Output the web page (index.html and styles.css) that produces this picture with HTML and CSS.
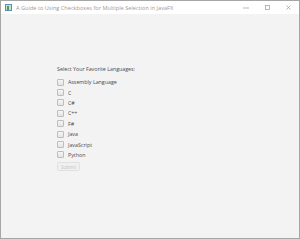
FILE: index.html
```html
<!DOCTYPE html>
<html lang="en">
<head>
    <meta charset="UTF-8">
    <title>A Guide to Using Checkboxes for Multiple Selection in JavaFX</title>
    <link rel="stylesheet" href="styles.css">
</head>
<body>
    <div class="window">
        <div class="title-bar">
            <svg class="app-icon" width="7" height="7" viewBox="0 0 7 7">
                <rect x="0" y="0" width="7" height="7" fill="#5a8fb8"/>
                <rect x="1" y="1" width="5" height="5" fill="#cfe0c8"/>
                <rect x="2" y="2" width="2" height="4" fill="#4e9a6a"/>
            </svg>
            <span class="title">A Guide to Using Checkboxes for Multiple Selection in JavaFX</span>
            <div class="controls">
                <svg width="6" height="6" viewBox="0 0 6 6"><line x1="0" y1="3" x2="6" y2="3" stroke="#9a9a9a" stroke-width="0.7"/></svg>
                <svg width="5" height="5" viewBox="0 0 5 5"><rect x="0.5" y="0.5" width="4" height="4" fill="none" stroke="#9a9a9a" stroke-width="0.7"/></svg>
                <svg width="5" height="5" viewBox="0 0 5 5"><path d="M0.5 0.5 L4.5 4.5 M4.5 0.5 L0.5 4.5" stroke="#9a9a9a" stroke-width="0.7"/></svg>
            </div>
        </div>
        <div class="content">
            <div class="form">
                <p class="heading">Select Your Favorite Languages:</p>
                <ul class="options">
                    <li><span class="box"></span>Assembly Language</li>
                    <li><span class="box"></span>C</li>
                    <li><span class="box"></span>C#</li>
                    <li><span class="box"></span>C++</li>
                    <li><span class="box"></span>F#</li>
                    <li><span class="box"></span>Java</li>
                    <li><span class="box"></span>JavaScript</li>
                    <li><span class="box"></span>Python</li>
                </ul>
                <button class="submit" disabled>Submit</button>
            </div>
        </div>
    </div>
</body>
</html>
```

FILE: styles.css
```css
html, body {
    margin: 0;
    padding: 0;
    height: 100%;
}
body {
    font-family: "Open Sans", "Liberation Sans", sans-serif;
    background-color: #fff;
}
.window {
    box-sizing: border-box;
    height: 239px;
    width: 300px;
    border: 1px solid #a6a6a6;
    display: flex;
    flex-direction: column;
}
.title-bar {
    height: 13px;
    background-color: #fff;
    display: flex;
    align-items: center;
    padding-left: 4px;
}
.app-icon {
    margin-right: 4px;
}
.title {
    font-size: 5.6px;
    color: #9a9a9a;
    white-space: nowrap;
}
.controls {
    margin-left: auto;
    display: flex;
    align-items: center;
    gap: 16px;
    padding-right: 8px;
}
.content {
    flex: 1;
    background-color: #f3f3f3;
    padding: 51px 0 0 56px;
}
.heading {
    margin: 0 0 4px 0;
    font-size: 5.3px;
    line-height: 8px;
    color: #4a4a4a;
}
.options {
    list-style: none;
    margin: 0;
    padding: 0;
}
.options li {
    display: flex;
    align-items: center;
    height: 10.4px;
    font-size: 5.3px;
    color: #4a4a4a;
}
.box {
    box-sizing: border-box;
    width: 7px;
    height: 7px;
    margin-right: 4px;
    border: 1px solid #bdbdbd;
    border-radius: 1px;
    background: linear-gradient(#f6f6f6, #e4e4e4);
}
.submit {
    display: block;
    margin-top: 2px;
    width: 23px;
    height: 9px;
    padding: 0;
    font-family: inherit;
    font-size: 4.6px;
    color: #c4c4c4;
    background-color: #f0f0f0;
    border: 1px solid #e0e0e0;
    border-radius: 1.5px;
}
```
